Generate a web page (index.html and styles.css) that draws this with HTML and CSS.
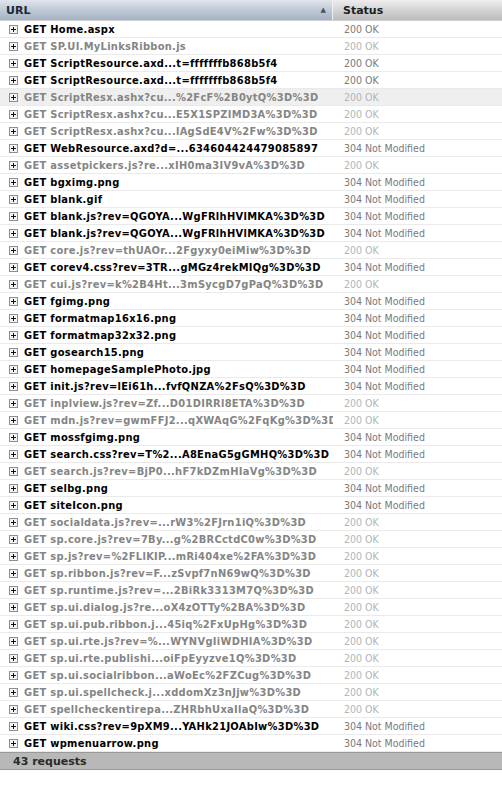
FILE: index.html
```html
<!DOCTYPE html>
<html>
<head>
<meta charset="utf-8">
<link rel="stylesheet" href="styles.css">
</head>
<body>
<div class="panel">
  <div class="head">
    <div class="hcell hurl"><span>URL</span><span class="arrow">▲</span></div>
    <div class="hcell hstatus">Status</div>
  </div>
  <div class="rows" id="rows"></div>
  <div class="foot">43 requests</div>
</div>
<script>
var data = [
["GET Home.aspx",1,"200 OK"],
["GET SP.UI.MyLinksRibbon.js",0,"200 OK"],
["GET ScriptResource.axd...t=fffffffb868b5f4",1,"200 OK"],
["GET ScriptResource.axd...t=fffffffb868b5f4",1,"200 OK"],
["GET ScriptResx.ashx?cu...%2FcF%2B0ytQ%3D%3D",0,"200 OK","hover"],
["GET ScriptResx.ashx?cu...E5X1SPZIMD3A%3D%3D",0,"200 OK"],
["GET ScriptResx.ashx?cu...lAgSdE4V%2Fw%3D%3D",0,"200 OK"],
["GET WebResource.axd?d=...634604424479085897",1,"304 Not Modified"],
["GET assetpickers.js?re...xIH0ma3IV9vA%3D%3D",0,"200 OK"],
["GET bgximg.png",1,"304 Not Modified"],
["GET blank.gif",1,"304 Not Modified"],
["GET blank.js?rev=QGOYA...WgFRlhHVlMKA%3D%3D",1,"304 Not Modified"],
["GET blank.js?rev=QGOYA...WgFRlhHVlMKA%3D%3D",1,"304 Not Modified"],
["GET core.js?rev=thUAOr...2Fgyxy0eiMiw%3D%3D",0,"200 OK"],
["GET corev4.css?rev=3TR...gMGz4rekMIQg%3D%3D",1,"304 Not Modified"],
["GET cui.js?rev=k%2B4Ht...3mSycgD7gPaQ%3D%3D",0,"200 OK"],
["GET fgimg.png",1,"304 Not Modified"],
["GET formatmap16x16.png",1,"304 Not Modified"],
["GET formatmap32x32.png",1,"304 Not Modified"],
["GET gosearch15.png",1,"304 Not Modified"],
["GET homepageSamplePhoto.jpg",1,"304 Not Modified"],
["GET init.js?rev=lEi61h...fvfQNZA%2FsQ%3D%3D",1,"304 Not Modified"],
["GET inplview.js?rev=Zf...D01DIRRl8ETA%3D%3D",0,"200 OK"],
["GET mdn.js?rev=gwmFFJ2...qXWAqG%2FqKg%3D%3D",0,"200 OK"],
["GET mossfgimg.png",1,"304 Not Modified"],
["GET search.css?rev=T%2...A8EnaG5gGMHQ%3D%3D",1,"304 Not Modified"],
["GET search.js?rev=BjP0...hF7kDZmHIaVg%3D%3D",0,"200 OK"],
["GET selbg.png",1,"304 Not Modified"],
["GET siteIcon.png",1,"304 Not Modified"],
["GET socialdata.js?rev=...rW3%2FJrn1iQ%3D%3D",0,"200 OK"],
["GET sp.core.js?rev=7By...g%2BRCctdC0w%3D%3D",0,"200 OK"],
["GET sp.js?rev=%2FLlKIP...mRi404xe%2FA%3D%3D",0,"200 OK"],
["GET sp.ribbon.js?rev=F...zSvpf7nN69wQ%3D%3D",0,"200 OK"],
["GET sp.runtime.js?rev=...2BiRk3313M7Q%3D%3D",0,"200 OK"],
["GET sp.ui.dialog.js?re...oX4zOTTy%2BA%3D%3D",0,"200 OK"],
["GET sp.ui.pub.ribbon.j...45iq%2FxUpHg%3D%3D",0,"200 OK"],
["GET sp.ui.rte.js?rev=%...WYNVgIiWDHIA%3D%3D",0,"200 OK"],
["GET sp.ui.rte.publishi...oiFpEyyzve1Q%3D%3D",0,"200 OK"],
["GET sp.ui.socialribbon...aWoEc%2FZCug%3D%3D",0,"200 OK"],
["GET sp.ui.spellcheck.j...xddomXz3nJjw%3D%3D",0,"200 OK"],
["GET spellcheckentirepa...ZHRbhUxaIlaQ%3D%3D",0,"200 OK"],
["GET wiki.css?rev=9pXM9...YAHk21JOAbIw%3D%3D",1,"304 Not Modified"],
["GET wpmenuarrow.png",1,"304 Not Modified"]
];
var icon = '<svg class="plus" width="9" height="9" viewBox="0 0 9 9"><rect x="0.5" y="0.5" width="8" height="8" fill="#f4f4f4" stroke="#8e8e8e"/><path d="M2 4.5H7M4.5 2V7" stroke="#111" stroke-width="1"/></svg>';
var html = "";
data.forEach(function(d){
  var cls = "row" + (d[1] ? " loaded" : " cached") + (d[3] ? " hover" : "");
  html += '<div class="' + cls + '"><div class="url">' + icon + '<span class="utext">' + d[0] + '</span></div><div class="status">' + d[2] + '</div></div>';
});
document.getElementById("rows").innerHTML = html;
</script>
</body>
</html>
```
FILE: styles.css
```css
html, body {
  margin: 0;
  padding: 0;
  background: #ffffff;
}
body {
  font-family: "DejaVu Sans", sans-serif;
  font-size: 11px;
  width: 502px;
}
.panel {
  display: flex;
  flex-direction: column;
}
.head {
  display: grid;
  grid-template-columns: 333px 1fr;
  height: 21px;
  box-sizing: border-box;
  border-bottom: 1px solid #d0d0d0;
}
.hcell {
  display: flex;
  align-items: center;
  font-weight: bold;
  font-size: 11px;
}
.hurl {
  justify-content: space-between;
  padding-left: 6px;
  padding-right: 6px;
  background: linear-gradient(#dfe6ee, #c2ccd8 45%, #a4b2c2);
  color: #1b2836;
  border-right: 1px solid #eef0f2;
}
.arrow {
  font-size: 7px;
  color: #4a525a;
}
.hstatus {
  padding-left: 10px;
  background: linear-gradient(#eeeeee, #d6d6d6 45%, #bcbcbc);
  color: #1e1e1e;
}
.rows {
  display: flex;
  flex-direction: column;
}
.row {
  display: grid;
  grid-template-columns: 333px 1fr;
  height: 17px;
  box-sizing: border-box;
  border-bottom: 1px solid #eaeaea;
  align-items: center;
}
.row.hover {
  background: #efefef;
}
.url {
  display: flex;
  align-items: center;
  overflow: hidden;
  white-space: nowrap;
  padding-left: 9px;
  padding-right: 3px;
}
.plus {
  flex: none;
  margin-right: 6px;
}
.utext {
  font-family: "DejaVu Sans Condensed", "DejaVu Sans", sans-serif;
  font-weight: bold;
  letter-spacing: 0.3px;
}
.loaded .utext {
  color: #000000;
}
.cached .utext {
  color: #858585;
}
.status {
  font-family: "DejaVu Sans Condensed", "DejaVu Sans", sans-serif;
  font-size: 10.5px;
  padding-left: 11px;
  white-space: nowrap;
  color: #7a7a7a;
}
.cached .status {
  color: #b4b4b4;
}
.foot {
  height: 18px;
  box-sizing: border-box;
  background: #b8b8b8;
  border-top: 1px solid #999999;
  border-bottom: 1px solid #9a9a9a;
  display: flex;
  align-items: center;
  padding-left: 13px;
  font-weight: bold;
  color: #2a2a2a;
}
```
